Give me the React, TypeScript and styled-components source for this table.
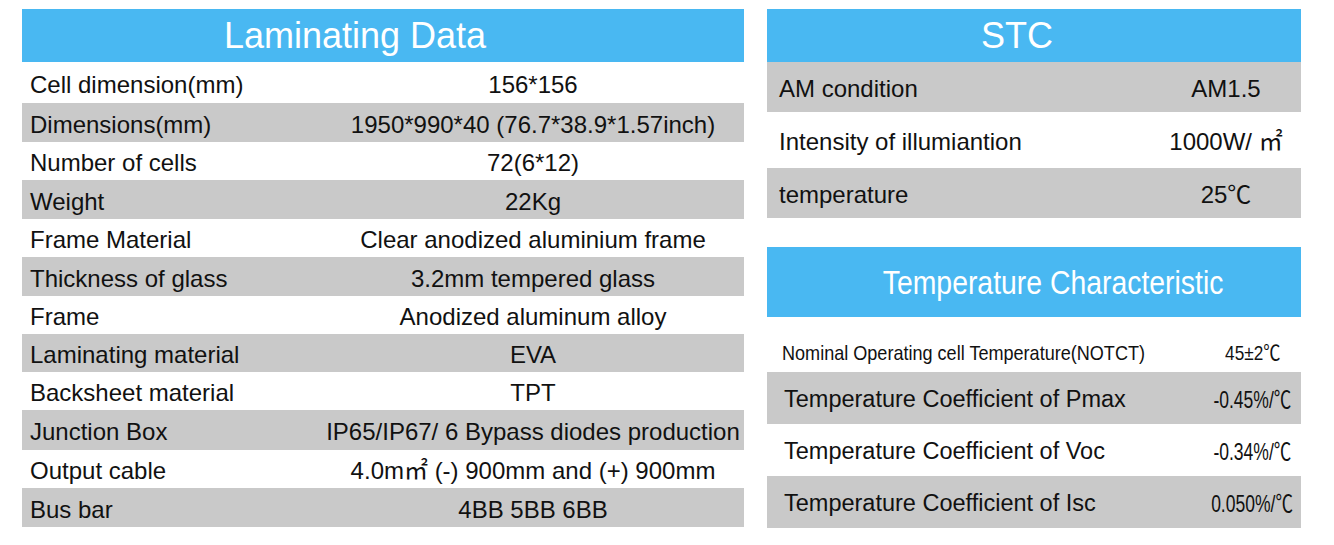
import React from 'react';
import styled, { createGlobalStyle } from 'styled-components';

const BLUE = '#49b8f2';
const GRAY = '#c9c9c9';

const GlobalStyle = createGlobalStyle`
  body {
    margin: 0;
    background: #fff;
    color: #111;
    font-family: "Liberation Sans", Arial, "Noto Sans CJK SC", sans-serif;
  }
`;

const Page = styled.div`
  display: flex;
  align-items: flex-start;
  gap: 23px;
  width: 1334px;
  box-sizing: border-box;
  padding: 9px 0 0 22px;
`;

const Table = styled.div<{ $width: number }>`
  width: ${p => p.$width}px;
  display: flex;
  flex-direction: column;
`;

const RightColumn = styled.div`
  display: flex;
  flex-direction: column;
  gap: 29px;
`;

const Header = styled.div<{ $height: number; $padLeft?: number; $padRight?: number }>`
  height: ${p => p.$height}px;
  box-sizing: border-box;
  padding: 0 ${p => p.$padRight || 0}px 0 ${p => p.$padLeft || 0}px;
  background: ${BLUE};
  color: #fff;
  display: flex;
  align-items: center;
  justify-content: center;
  font-size: 36px;
  line-height: 1;
  white-space: nowrap;
`;

const Row = styled.div<{ $height: number; $shaded: boolean; $cols: string; $padTop?: number }>`
  display: grid;
  grid-template-columns: ${p => p.$cols};
  align-items: center;
  height: ${p => p.$height}px;
  box-sizing: border-box;
  padding-top: ${p => p.$padTop || 0}px;
  background: ${p => (p.$shaded ? GRAY : 'transparent')};
  font-size: 24px;
  line-height: 1;
`;

const Label = styled.div<{ $indent: number; $size?: number }>`
  padding-left: ${p => p.$indent}px;
  white-space: nowrap;
  font-size: ${p => p.$size || 24}px;
`;

const Value = styled.div<{ $size?: number }>`
  display: flex;
  justify-content: center;
  white-space: nowrap;
  font-size: ${p => p.$size || 24}px;
`;

const Squeeze = styled.span<{ $x: number; $origin?: string }>`
  display: inline-block;
  transform: scaleX(${p => p.$x});
  transform-origin: ${p => p.$origin || 'center'};
  white-space: nowrap;
`;

const laminating: [string, string, number][] = [
  ['Cell dimension(mm)', '156*156', 41],
  ['Dimensions(mm)', '1950*990*40 (76.7*38.9*1.57inch)', 39],
  ['Number of cells', '72(6*12)', 38],
  ['Weight', '22Kg', 39],
  ['Frame Material', 'Clear anodized aluminium frame', 38],
  ['Thickness of glass', '3.2mm tempered glass', 39],
  ['Frame', 'Anodized aluminum alloy', 38],
  ['Laminating material', 'EVA', 38],
  ['Backsheet material', 'TPT', 38],
  ['Junction Box', 'IP65/IP67/ 6 Bypass diodes production', 40],
  ['Output cable', '4.0m㎡ (-) 900mm and (+) 900mm', 38],
  ['Bus bar', '4BB 5BB 6BB', 39],
];

const stc: [string, string, number][] = [
  ['AM condition', 'AM1.5', 50],
  ['Intensity of illumiantion', '1000W/ ㎡', 56],
  ['temperature', '25℃', 50],
];

const coefficients: [string, string][] = [
  ['Temperature Coefficient of Pmax', '-0.45%/℃'],
  ['Temperature Coefficient of Voc', '-0.34%/℃'],
  ['Temperature Coefficient of Isc', '0.050%/℃'],
];

const App: React.FC = () => {
  return (
    <>
      <GlobalStyle />
      <Page>
        <Table $width={722}>
          <Header $height={53} $padRight={56}>Laminating Data</Header>
          {laminating.map(([label, value, h], i) => (
            <Row key={label} $height={h} $shaded={i % 2 === 1} $cols="300px 1fr" $padTop={4}>
              <Label $indent={8}>{label}</Label>
              <Value>{value}</Value>
            </Row>
          ))}
        </Table>

        <RightColumn>
          <Table $width={534}>
            <Header $height={53} $padRight={34}>STC</Header>
            {stc.map(([label, value, h], i) => (
              <Row key={label} $height={h} $shaded={i % 2 === 0} $cols="1fr 150px" $padTop={4}>
                <Label $indent={12}>{label}</Label>
                <Value>{value}</Value>
              </Row>
            ))}
          </Table>

          <Table $width={534}>
            <Header $height={70} $padLeft={38}>
              <Squeeze $x={0.86}>
                <span style={{ fontSize: 33 }}>Temperature Characteristic</span>
              </Squeeze>
            </Header>
            <Row $height={55} $shaded={false} $cols="1fr 98px" $padTop={15}>
              <Label $indent={15} $size={21}>
                <Squeeze $x={0.86} $origin="left">Nominal Operating cell Temperature(NOTCT)</Squeeze>
              </Label>
              <Value $size={21}>
                <Squeeze $x={0.82}>45±2℃</Squeeze>
              </Value>
            </Row>
            {coefficients.map(([label, value], i) => (
              <Row key={label} $height={52} $shaded={i % 2 === 0} $cols="1fr 98px" $padTop={3}>
                <Label $indent={17} $size={23.5}>{label}</Label>
                <Value $size={24}>
                  <Squeeze $x={0.73}>{value}</Squeeze>
                </Value>
              </Row>
            ))}
          </Table>
        </RightColumn>
      </Page>
    </>
  );
};

export default App;
